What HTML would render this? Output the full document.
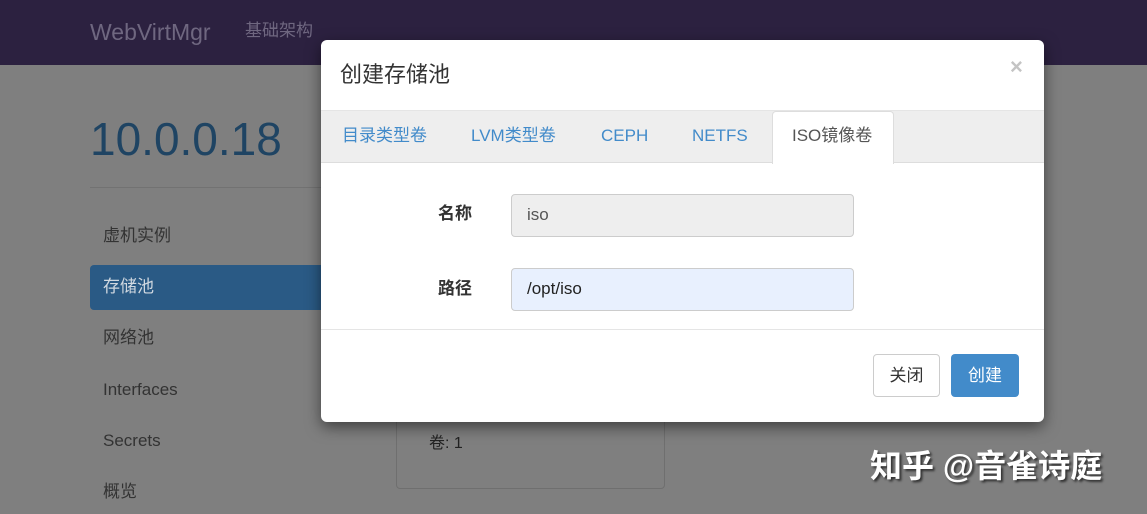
<!DOCTYPE html>
<html><head><meta charset="utf-8"><style>
*{box-sizing:border-box;margin:0;padding:0}
body{width:1147px;height:514px;overflow:hidden;background:#7f7f7f;font-family:"Liberation Sans","Noto Sans CJK SC",sans-serif;position:relative;line-height:20px}
.nav{position:absolute;left:0;top:0;width:1147px;height:65px;background:#2c2140}
.abs{position:absolute;white-space:nowrap}
.side{font-size:17px;color:#333}
.modal{position:absolute;left:321px;top:40px;width:723px;height:382px;background:#fff;border-radius:6px;box-shadow:0 5px 15px rgba(0,0,0,.5)}
.tabs{position:absolute;left:0;top:70px;width:723px;height:53px;background:#eee;border-top:1px solid #e5e5e5;border-bottom:1px solid #ddd}
.tab{position:absolute;top:15px;font-size:17px;color:#428bca}
.inp{position:absolute;left:190px;width:343px;height:43px;border:1px solid #ccc;border-radius:4px;font-size:17px;padding:10px 15px;color:#555}
.lbl{position:absolute;font-size:17px;font-weight:bold;color:#333}
</style></head><body>
<div class="nav"></div>
<div class="abs" style="left:90px;top:20px;font-size:23px;color:#6f6780;line-height:24px">WebVirtMgr</div>
<div class="abs" style="left:245px;top:21px;font-size:17px;color:#6f6780">基础架构</div>
<div class="abs" style="left:90px;top:116px;font-size:46px;color:#1f4463;line-height:46px">10.0.0.18</div>
<div class="abs" style="left:90px;top:187px;width:240px;height:1px;background:#727272"></div>
<div class="abs side" style="left:103px;top:226px">虚机实例</div>
<div class="abs" style="left:90px;top:265px;width:240px;height:45px;background:#2a5a85;border-radius:4px"></div>
<div class="abs side" style="left:103px;top:277px;color:#d0d8e0">存储池</div>
<div class="abs side" style="left:103px;top:328px">网络池</div>
<div class="abs side" style="left:103px;top:380px">Interfaces</div>
<div class="abs side" style="left:103px;top:431px">Secrets</div>
<div class="abs side" style="left:103px;top:482px">概览</div>
<div class="abs" style="left:396px;top:400px;width:269px;height:89px;border:1px solid #6f6f6f;border-radius:4px"></div>
<div class="abs" style="left:429px;top:434px;font-size:16px;color:#222">卷: 1</div>
<div class="abs" style="left:870px;top:449px;font-size:32px;font-weight:bold;color:#fff;text-shadow:2px 2px 2px #333;line-height:34px">知乎 @音雀诗庭</div>
<div class="modal">
 <div class="abs" style="left:19px;top:23px;font-size:22px;color:#333;line-height:24px">创建存储池</div>
 <div class="abs" style="left:689px;top:17px;font-size:22px;font-weight:bold;color:#c4c4c4">×</div>
 <div class="tabs">
  <div class="tab" style="left:21px">目录类型卷</div>
  <div class="tab" style="left:150px">LVM类型卷</div>
  <div class="tab" style="left:280px">CEPH</div>
  <div class="tab" style="left:371px">NETFS</div>
  <div style="position:absolute;left:451px;top:0;width:122px;height:53px;background:#fff;border:1px solid #ddd;border-bottom:none;border-radius:4px 4px 0 0"></div>
  <div class="tab" style="left:471px;color:#555">ISO镜像卷</div>
 </div>
 <div class="lbl" style="left:117px;top:164px">名称</div>
 <div class="inp" style="top:154px;background:#eee">iso</div>
 <div class="lbl" style="left:117px;top:239px">路径</div>
 <div class="inp" style="top:228px;background:#e8f0fe;color:#222">/opt/iso</div>
 <div class="abs" style="left:0;top:289px;width:723px;height:1px;background:#e5e5e5"></div>
 <div class="abs" style="left:552px;top:314px;width:67px;height:43px;border:1px solid #ccc;border-radius:4px;font-size:17px;color:#333;text-align:center;line-height:41px">关闭</div>
 <div class="abs" style="left:630px;top:314px;width:68px;height:43px;background:#428bca;border-radius:4px;font-size:17px;color:#fff;text-align:center;line-height:43px">创建</div>
</div>
</body></html>
